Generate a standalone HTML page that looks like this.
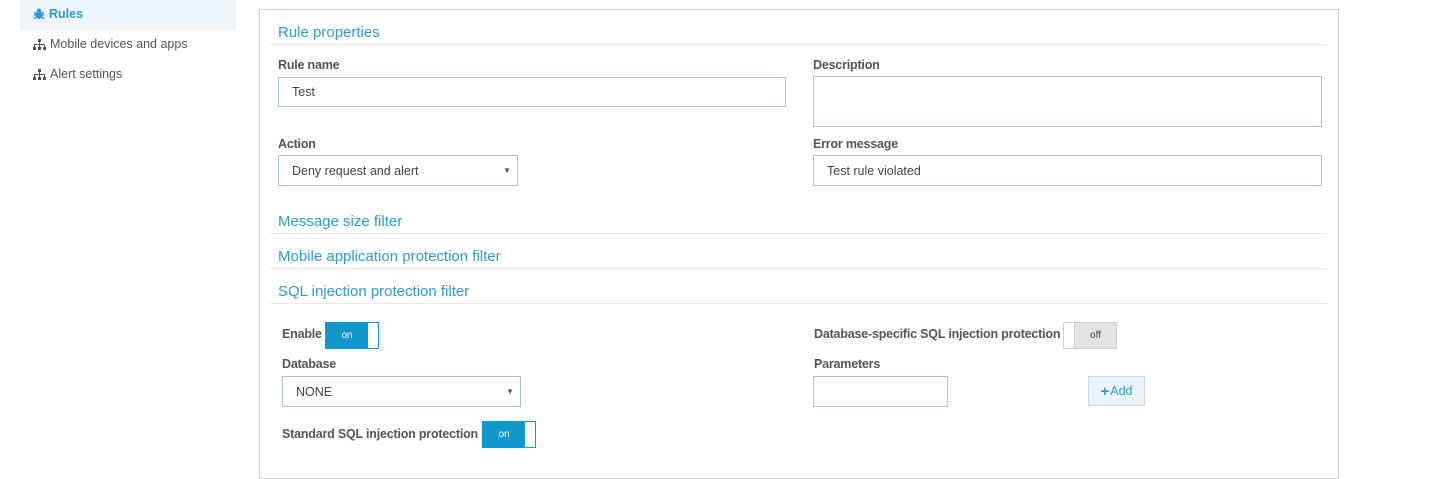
<!DOCTYPE html>
<html><head><style>
body{margin:0;width:1436px;height:466px;overflow:hidden;background:#fff;font-family:"Liberation Sans",sans-serif;color:#555;position:relative}
.a{position:absolute}
.nav{font-size:12.5px;color:#555;display:flex;align-items:center;gap:4px}
.h{position:absolute;left:278px;font-size:15px;color:#2b9bd0}
.ln{position:absolute;left:270px;width:1057px;height:1px;background:#e8e8e8}
.lb{position:absolute;font-size:12.5px;font-weight:bold;color:#555;letter-spacing:-0.2px}
.in{position:absolute;border:1px solid #a9c0d6;box-sizing:border-box;font-size:12.5px;color:#444;padding-left:13px;display:flex;align-items:center;background:#fff}
.tg{position:absolute;width:54px;height:27px;box-sizing:border-box;font-size:10px;display:flex;align-items:center}
.on{background:#0e98cc;color:#fff;border:1px solid #0e98cc}
.on span{flex:1;text-align:center}
.on i{width:10px;height:100%;background:#fff}
.off{background:#e3e3e3;color:#444;border:1px solid #ccc}
.off i{width:10px;height:100%;background:#fff;border-right:1px solid #ccc}
.off span{flex:1;text-align:center}
.arr{position:absolute;right:6px;font-size:8px;color:#555}
</style></head><body>
<div class="a" style="left:20px;top:0;width:216px;height:30px;background:#eef5fb"></div>
<div class="a nav" style="left:33px;top:7px;color:#2b9bd0;font-weight:bold"><svg width="12" height="12" viewBox="0 0 12 12"><ellipse cx="6" cy="7" rx="3.5" ry="4" fill="#2b9bd0"/><circle cx="6" cy="2.5" r="2" fill="#2b9bd0"/><path d="M1 4l2 2M11 4l-2 2M0.5 7h2M11.5 7h-2M1 11l2-2M11 11l-2-2" stroke="#2b9bd0" stroke-width="1.3"/></svg><span>Rules</span></div>
<div class="a nav" style="left:33px;top:37px"><svg width="13" height="11" viewBox="0 0 13 11"><g fill="#555"><rect x="5" y="0" width="3" height="3"/><rect x="0" y="8" width="3" height="3"/><rect x="5" y="8" width="3" height="3"/><rect x="10" y="8" width="3" height="3"/><rect x="6" y="3" width="1" height="5"/><rect x="1" y="5" width="11" height="1"/><rect x="1" y="5" width="1" height="3"/><rect x="11" y="5" width="1" height="3"/></g></svg>Mobile devices and apps</div>
<div class="a nav" style="left:33px;top:67px"><svg width="13" height="11" viewBox="0 0 13 11"><g fill="#555"><rect x="5" y="0" width="3" height="3"/><rect x="0" y="8" width="3" height="3"/><rect x="5" y="8" width="3" height="3"/><rect x="10" y="8" width="3" height="3"/><rect x="6" y="3" width="1" height="5"/><rect x="1" y="5" width="11" height="1"/><rect x="1" y="5" width="1" height="3"/><rect x="11" y="5" width="1" height="3"/></g></svg>Alert settings</div>
<div class="a" style="left:259px;top:9px;width:1080px;height:470px;border:1px solid #ccc;box-sizing:border-box"></div>
<div class="h" style="top:24px">Rule properties</div><div class="ln" style="top:44px"></div>
<div class="lb" style="left:278px;top:58px">Rule name</div>
<div class="in" style="left:278px;top:77px;width:508px;height:30px">Test</div>
<div class="lb" style="left:813px;top:58px">Description</div>
<div class="in" style="left:813px;top:76px;width:509px;height:51px"></div>
<div class="lb" style="left:278px;top:137px">Action</div>
<div class="in" style="left:278px;top:155px;width:240px;height:31px">Deny request and alert<span class="arr">▼</span></div>
<div class="lb" style="left:813px;top:137px">Error message</div>
<div class="in" style="left:813px;top:155px;width:509px;height:31px">Test rule violated</div>
<div class="h" style="top:213px">Message size filter</div><div class="ln" style="top:233px"></div>
<div class="h" style="top:248px">Mobile application protection filter</div><div class="ln" style="top:268px"></div>
<div class="h" style="top:283px">SQL injection protection filter</div><div class="ln" style="top:303px"></div>
<div class="lb" style="left:282px;top:327px">Enable</div>
<div class="tg on" style="left:325px;top:322px"><span>on</span><i></i></div>
<div class="lb" style="left:282px;top:357px">Database</div>
<div class="in" style="left:282px;top:376px;width:239px;height:31px">NONE<span class="arr">▼</span></div>
<div class="lb" style="left:282px;top:427px">Standard SQL injection protection</div>
<div class="tg on" style="left:482px;top:421px"><span>on</span><i></i></div>
<div class="lb" style="left:814px;top:327px">Database-specific SQL injection protection</div>
<div class="tg off" style="left:1063px;top:322px"><i></i><span>off</span></div>
<div class="lb" style="left:814px;top:357px">Parameters</div>
<div class="in" style="left:813px;top:376px;width:135px;height:31px"></div>
<div class="a" style="left:1088px;top:376px;width:57px;height:30px;box-sizing:border-box;border:1px solid #c8dbe6;background:#e9f2f8;color:#2b9bd0;font-size:12.5px;display:flex;align-items:center;justify-content:center"><b style="font-size:15px;margin-right:1px">+</b>Add</div>
</body></html>
